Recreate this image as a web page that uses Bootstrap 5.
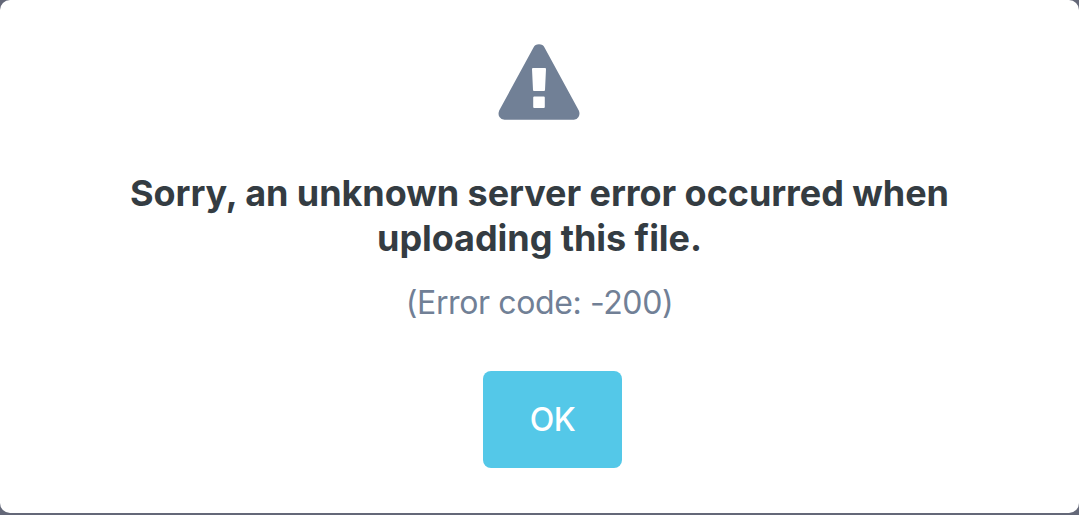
<!DOCTYPE html>
<html lang="en">
<head>
  <meta charset="UTF-8">
  <meta name="viewport" content="width=device-width, initial-scale=1.0">
  <title>Upload error</title>
  <link href="https://cdn.jsdelivr.net/npm/bootstrap@5.3.0/dist/css/bootstrap.min.css" rel="stylesheet">
  <style>
    body {
      height: 515px;
      overflow: hidden;
      background: #646878;
      font-family: Inter, "Liberation Sans", sans-serif;
    }
    .error-dialog {
      height: 513px;
      border-radius: 10px;
      padding-top: 44px;
    }
    .warning-icon {
      width: 82px;
      height: 76px;
      margin-right: 1px;
    }
    .error-title {
      margin-top: 51px;
      width: 860px;
      font-size: 36px;
      line-height: 45px;
      font-weight: 700;
      letter-spacing: -0.06px;
      color: #343c42;
    }
    .error-code {
      margin-top: 18px;
      font-size: 32px;
      line-height: 48px;
      letter-spacing: -0.38px;
      color: #718096;
    }
    .btn-ok {
      width: 139px;
      height: 97px;
      margin: 44px 0 0 26px;
      border: 0;
      border-radius: 8px;
      font-size: 32px;
      font-weight: 500;
      letter-spacing: -0.4px;
      color: #fff;
      background: #54c8e8;
    }
    .btn-ok:hover {
      color: #fff;
      background: #3bbbdd;
    }
  </style>
</head>
<body>
  <div class="error-dialog bg-white d-flex flex-column align-items-center text-center" role="alertdialog">
    <svg class="warning-icon" viewBox="0 0 82 76" aria-hidden="true">
      <path fill="#718096" fill-rule="evenodd" d="M35.5 3.5Q37 .3 41 .3T46.5 3.5L80.8 66.5Q82.3 70 80.5 73T75.5 75.8H6.5Q3.3 75.8 1.5 73T1.2 66.5ZM35 24Q34 24 34 25L35 46Q35 47 36 47H46Q47 47 47 46L48 25Q48 24 47 24ZM36.2 52.6Q35.2 52.6 35.2 53.6V63Q35.2 64 36.2 64H45.8Q46.8 64 46.8 63V53.6Q46.8 52.6 45.8 52.6Z"/>
    </svg>
    <h1 class="error-title mb-0">Sorry, an unknown server error occurred when uploading this file.</h1>
    <p class="error-code mb-0">(Error code: -200)</p>
    <button type="button" class="btn btn-ok">OK</button>
  </div>
  <script src="https://cdn.jsdelivr.net/npm/bootstrap@5.3.0/dist/js/bootstrap.bundle.min.js"></script>
</body>
</html>
